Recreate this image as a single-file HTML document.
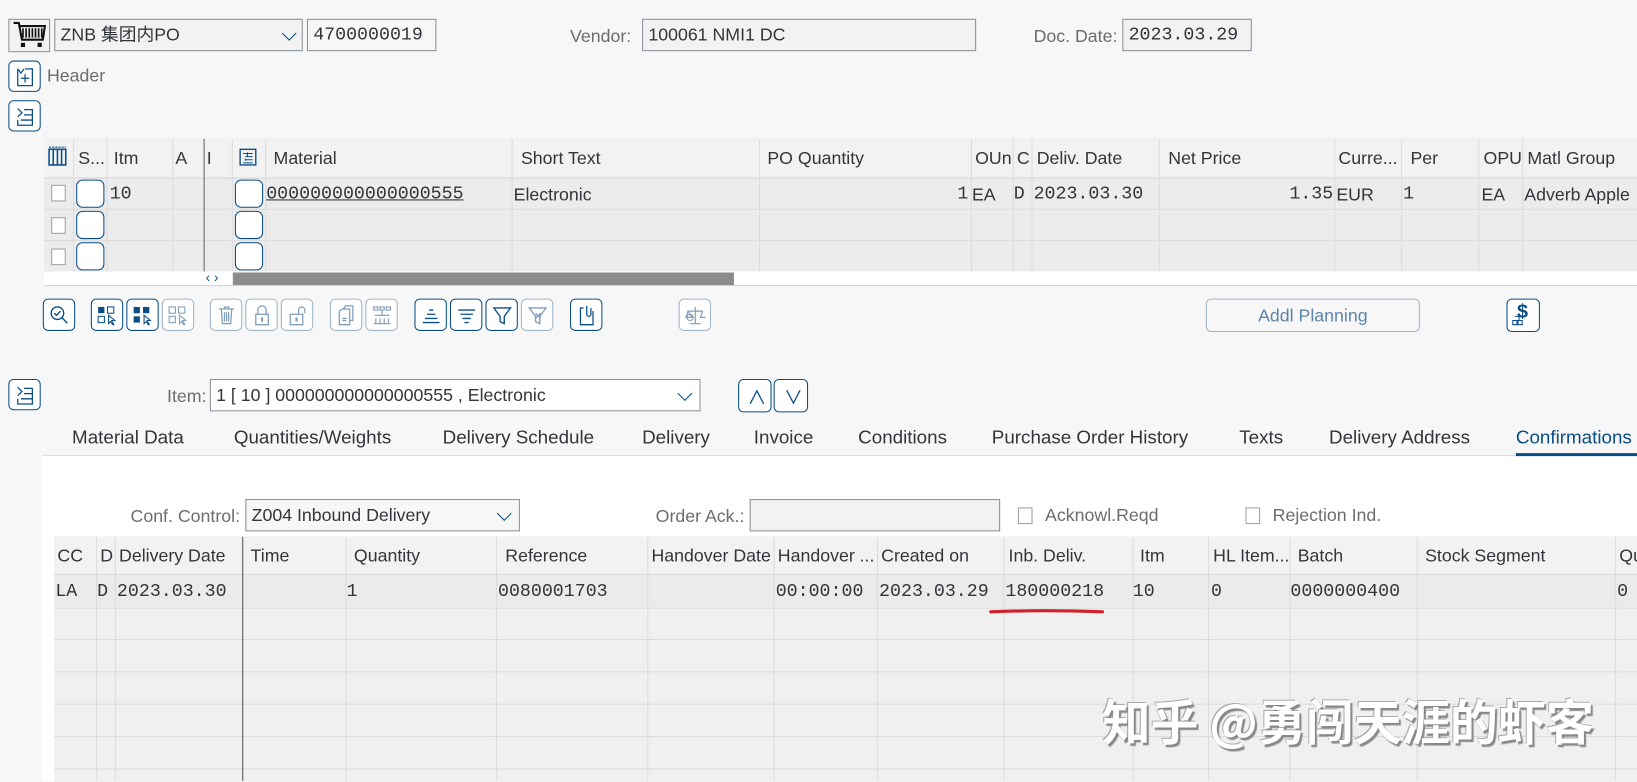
<!DOCTYPE html>
<html><head><meta charset="utf-8"><style>
html,body{margin:0;padding:0;background:#f7f7f7;width:1637px;height:781px;overflow:hidden}
#w{position:absolute;left:0;top:0;width:1568px;height:748px;transform:scale(1.04401);transform-origin:0 0;font-family:"Liberation Sans Narrow","Liberation Sans","Noto Sans CJK SC",sans-serif;font-size:17px;color:#32363a}
.a{position:absolute}
.fld{position:absolute;border:1px solid #89919a;background:#f2f2f2;box-sizing:border-box;padding-left:5px;line-height:30px;white-space:nowrap;overflow:hidden}
.mono{font-family:"Liberation Mono","DejaVu Sans Mono",monospace;font-size:17.5px}
.lbl{position:absolute;color:#6a6d70;line-height:20px;white-space:nowrap;margin-top:1px}
.btn{position:absolute;width:31px;height:31px;box-sizing:border-box;border:1px solid #0a4d86;border-radius:5px;background:#fff}
.btn.d{border-color:#9fb5c9}
.btn svg{position:absolute;left:5px;top:5px}
.t{position:absolute;white-space:nowrap;margin-top:1px}
.vl{position:absolute;width:1px;background:#dcdcdc}
.hl{position:absolute;height:1px;background:#dcdcdc}
.cb{position:absolute;width:14px;height:16px;border:1px solid #9aa0a6;background:#fff;box-sizing:border-box}
.rb{position:absolute;width:27px;height:27px;border:1.5px solid #0a4d86;border-radius:6px;background:#fff;box-sizing:border-box}
.chev{position:absolute;width:9px;height:9px;border-right:1.3px solid #0a4d86;border-bottom:1.3px solid #0a4d86;transform:rotate(45deg)}
</style></head><body><div id="w">

<div class="a" style="left:8px;top:18px;width:40px;height:32px;border:1px solid #89919a;background:#f2f2f2;box-sizing:border-box">
<svg width="36" height="30" viewBox="0 0 36 30" style="position:absolute;left:1px;top:0"><path d="M3 3h5l3 16h20l2-13H9" fill="none" stroke="#111" stroke-width="2"/><path d="M12 8v9M15 8v9M18 8v9M21 8v9M24 8v9M27 8v9M30 8v9" stroke="#111" stroke-width="1.6"/><rect x="10" y="22" width="4" height="4" fill="#111"/><rect x="26" y="22" width="4" height="4" fill="#111"/></svg></div>
<div class="fld" style="left:52px;top:18px;width:238px;height:31px">ZNB 集团内PO</div>
<div class="chev" style="left:272px;top:27px"></div>
<div class="fld mono" style="left:294px;top:18px;width:124px;height:31px;background:#f7f7f7">4700000019</div>
<div class="lbl" style="left:546px;top:24px">Vendor:</div>
<div class="fld" style="left:615px;top:18px;width:320px;height:31px">100061 NMI1 DC</div>
<div class="lbl" style="left:990px;top:24px">Doc. Date:</div>
<div class="fld mono" style="left:1075px;top:18px;width:124px;height:31px">2023.03.29</div>

<div class="btn" style="left:8px;top:58px;height:30px"><svg width="20" height="20" viewBox="0 0 20 20"><path d="M3 2v16h14V2H10M3 2l3 4 3-4M10 7v8M6 11h8" fill="none" stroke="#0a4d86" stroke-width="1.2"/></svg></div>
<div class="lbl" style="left:45px;top:62px;color:#6a6d70">Header</div>
<div class="btn" style="left:8px;top:96px;height:30px"><svg width="20" height="20" viewBox="0 0 20 20"><path d="M3 2l4 4-4 4M9 3h8v15H3v-5M9 8h8M6 13h11" fill="none" stroke="#0a4d86" stroke-width="1.2"/></svg></div>

<div class="a" style="left:42px;top:133px;width:1526px;height:140px;background:#ececec;border-top:1px solid #d5d5d5"></div>
<div class="a" style="left:42px;top:133px;width:1526px;height:37px;background:#f2f2f2;border-bottom:1px solid #d5d5d5"></div>
<div class="hl" style="left:42px;top:200px;width:1526px"></div>
<div class="hl" style="left:42px;top:230px;width:1526px"></div>
<div class="a" style="left:42px;top:260px;width:1526px;height:13px;background:#fff;border-bottom:1px solid #d5d5d5"></div>
<div class="a" style="left:223px;top:261px;width:480px;height:12px;background:#8c8c8c"></div>
<div class="t" style="left:197px;top:257px;font-size:13px;color:#0a4d86">‹ ›</div>
<div class="vl" style="left:70px;top:133px;height:127px"></div>
<div class="vl" style="left:102px;top:133px;height:127px"></div>
<div class="vl" style="left:165px;top:133px;height:127px"></div>
<div class="a" style="left:195px;top:133px;width:1px;height:127px;background:#666"></div>
<div class="vl" style="left:222px;top:133px;height:127px"></div>
<div class="vl" style="left:254px;top:133px;height:127px"></div>
<div class="vl" style="left:490px;top:133px;height:127px"></div>
<div class="vl" style="left:727px;top:133px;height:127px"></div>
<div class="vl" style="left:930px;top:133px;height:127px"></div>
<div class="vl" style="left:970px;top:133px;height:127px"></div>
<div class="vl" style="left:988px;top:133px;height:127px"></div>
<div class="vl" style="left:1110px;top:133px;height:127px"></div>
<div class="vl" style="left:1278px;top:133px;height:127px"></div>
<div class="vl" style="left:1342px;top:133px;height:127px"></div>
<div class="vl" style="left:1416px;top:133px;height:127px"></div>
<div class="vl" style="left:1458px;top:133px;height:127px"></div>
<svg class="a" style="left:46px;top:140px" width="18" height="19" viewBox="0 0 18 19"><path d="M1 1h16" stroke="#0a4d86" stroke-dasharray="2 1"/><rect x="1" y="3" width="16" height="15" fill="none" stroke="#0a4d86" stroke-width="1.5"/><path d="M5 3v15M9 3v15M13 3v15" stroke="#0a4d86" stroke-width="1.5"/></svg>
<svg class="a" style="left:229px;top:142px" width="17" height="17" viewBox="0 0 17 17"><rect x="1" y="1" width="15" height="15" fill="none" stroke="#0a4d86" stroke-width="1.3"/><path d="M4 5h9M6 8h7M6 11h7M4 14h9M8 4v4M6 10v2" stroke="#0a4d86"/></svg>
<div class="t" style="left:75px;top:141px">S...</div>
<div class="t" style="left:109px;top:141px">Itm</div>
<div class="t" style="left:168px;top:141px">A</div>
<div class="t" style="left:198px;top:141px">I</div>
<div class="t" style="left:262px;top:141px">Material</div>
<div class="t" style="left:499px;top:141px">Short Text</div>
<div class="t" style="left:735px;top:141px">PO Quantity</div>
<div class="t" style="left:934px;top:141px">OUn</div>
<div class="t" style="left:974px;top:141px">C</div>
<div class="t" style="left:993px;top:141px">Deliv. Date</div>
<div class="t" style="left:1119px;top:141px">Net Price</div>
<div class="t" style="left:1282px;top:141px">Curre...</div>
<div class="t" style="left:1351px;top:141px">Per</div>
<div class="t" style="left:1421px;top:141px">OPU</div>
<div class="t" style="left:1463px;top:141px">Matl Group</div>
<div class="cb" style="left:49px;top:177px"></div><div class="cb" style="left:49px;top:208px"></div><div class="cb" style="left:49px;top:238px"></div>
<div class="rb" style="left:73px;top:172px"></div><div class="rb" style="left:73px;top:202px"></div><div class="rb" style="left:73px;top:232px"></div>
<div class="rb" style="left:225px;top:172px"></div><div class="rb" style="left:225px;top:202px"></div><div class="rb" style="left:225px;top:232px"></div>
<div class="t mono" style="left:105px;top:175px">10</div>
<div class="t mono" style="left:255px;top:175px;text-decoration:underline">000000000000000555</div>
<div class="t" style="left:492px;top:176px">Electronic</div>
<div class="t mono" style="left:917px;top:175px">1</div>
<div class="t" style="left:931px;top:176px">EA</div>
<div class="t mono" style="left:971px;top:175px">D</div>
<div class="t mono" style="left:990px;top:175px">2023.03.30</div>
<div class="t mono" style="left:1235px;top:175px">1.35</div>
<div class="t" style="left:1280px;top:176px">EUR</div>
<div class="t mono" style="left:1344px;top:175px">1</div>
<div class="t" style="left:1419px;top:176px">EA</div>
<div class="t" style="left:1460px;top:176px">Adverb Apple</div>

<div class="btn" style="left:41px;top:286px"><svg width="20" height="20" viewBox="0 0 20 20"><circle cx="8" cy="8" r="6" fill="none" stroke="#0a4d86" stroke-width="1.3"/><path d="M12.5 12.5l5 5M5 8l2 2 4-4" fill="none" stroke="#0a4d86" stroke-width="1.3"/></svg></div>
<div class="btn" style="left:87px;top:286px"><svg width="20" height="20" viewBox="0 0 20 20"><rect x="1" y="2" width="6" height="6" fill="#0a4d86"/><rect x="10" y="2" width="6" height="6" fill="none" stroke="#0a4d86"/><rect x="1" y="11" width="6" height="6" fill="none" stroke="#0a4d86"/><path d="M11 10l6 5-3 0 2 4-1 0-2-3-2 2z" fill="none" stroke="#0a4d86"/></svg></div>
<div class="btn" style="left:121px;top:286px"><svg width="20" height="20" viewBox="0 0 20 20"><rect x="1" y="2" width="6" height="6" fill="#0a4d86"/><rect x="10" y="2" width="6" height="6" fill="#0a4d86"/><rect x="1" y="11" width="6" height="6" fill="#0a4d86"/><path d="M11 10l6 5-3 0 2 4-1 0-2-3-2 2z" fill="none" stroke="#0a4d86"/></svg></div>
<div class="btn d" style="left:155px;top:286px"><svg width="20" height="20" viewBox="0 0 20 20"><rect x="1" y="2" width="6" height="6" fill="none" stroke="#7f9cb8"/><rect x="10" y="2" width="6" height="6" fill="none" stroke="#7f9cb8"/><rect x="1" y="11" width="6" height="6" fill="none" stroke="#7f9cb8"/><path d="M11 10l6 5-3 0 2 4-1 0-2-3-2 2z" fill="none" stroke="#7f9cb8"/></svg></div>
<div class="btn d" style="left:201px;top:286px"><svg width="20" height="20" viewBox="0 0 20 20"><path d="M3 4h14M8 4V2h4v2M5 4l1 14h8l1-14M8 7v9M10 7v9M12 7v9" fill="none" stroke="#7f9cb8" stroke-width="1.2"/></svg></div>
<div class="btn d" style="left:235px;top:286px"><svg width="20" height="20" viewBox="0 0 20 20"><path d="M6 9V5a4 4 0 018 0v4M4 9h12v10H4z" fill="none" stroke="#7f9cb8" stroke-width="1.2"/><rect x="9" y="12" width="2" height="4" fill="#7f9cb8"/></svg></div>
<div class="btn d" style="left:269px;top:286px"><svg width="20" height="20" viewBox="0 0 20 20"><path d="M11 9V5a3 3 0 016 0v3M3 9h12v10H3z" fill="none" stroke="#7f9cb8" stroke-width="1.2"/><rect x="8" y="12" width="2" height="4" fill="#7f9cb8"/></svg></div>
<div class="btn d" style="left:316px;top:286px"><svg width="20" height="20" viewBox="0 0 20 20"><path d="M7 4l2-3h7v14h-3M3 6l3-2h7v15H3zM6 13h4M6 15h4" fill="none" stroke="#7f9cb8" stroke-width="1.2"/></svg></div>
<div class="btn d" style="left:350px;top:286px"><svg width="20" height="20" viewBox="0 0 20 20"><path d="M2 2h4v3H2zM8 2h4v3H8zM14 2h4v3h-4zM2 18h16M4 18v-5M8 18v-5M12 18v-5M16 18v-5M10 5v5M3 10h14" fill="none" stroke="#7f9cb8" stroke-width="1.1"/></svg></div>
<div class="btn" style="left:397px;top:286px"><svg width="20" height="20" viewBox="0 0 20 20"><path d="M8 5h4M6 9h8M4 13h12M2 17h16" stroke="#0a4d86" stroke-width="1.3"/></svg></div>
<div class="btn" style="left:431px;top:286px"><svg width="20" height="20" viewBox="0 0 20 20"><path d="M2 5h16M4 9h12M6 13h8M8 17h4" stroke="#0a4d86" stroke-width="1.3"/></svg></div>
<div class="btn" style="left:465px;top:286px"><svg width="20" height="20" viewBox="0 0 20 20"><path d="M2 3h16l-6 8v7l-4-2v-5z" fill="none" stroke="#0a4d86" stroke-width="1.3"/></svg></div>
<div class="btn d" style="left:499px;top:286px"><svg width="20" height="20" viewBox="0 0 20 20"><path d="M2 3h16l-6 8v7l-4-2v-5zM8 8l5 5M13 8l-5 5" fill="none" stroke="#7f9cb8" stroke-width="1.3"/></svg></div>
<div class="btn" style="left:546px;top:286px"><svg width="20" height="20" viewBox="0 0 20 20"><path d="M7 3H4v16h12V6M10 1v8a2 2 0 004 0V3" fill="none" stroke="#0a4d86" stroke-width="1.2"/></svg></div>
<div class="btn d" style="left:650px;top:286px"><svg width="20" height="20" viewBox="0 0 20 20"><path d="M10 2v16M5 18h10M3 6h14M3 6l-2 6h6zM17 6l-2 6h6" fill="none" stroke="#7f9cb8" stroke-width="1.1"/><circle cx="5" cy="12" r="3" fill="none" stroke="#7f9cb8"/></svg></div>
<div class="a" style="left:1155px;top:286px;width:205px;height:32px;border:1px solid #9fb5c9;border-radius:5px;background:#f7f7f7;box-sizing:border-box;text-align:center;line-height:31px;color:#5d85aa">Addl Planning</div>
<div class="btn" style="left:1443px;top:286px;width:32px;height:32px"><div class="t" style="left:9px;top:0px;font-weight:bold;color:#0a4d86;font-size:19px">$</div><svg width="12" height="12" viewBox="0 0 12 12" style="left:4px;top:14px"><path d="M1 6h4v4H1zM6 6h4v4H6zM3 2h4v4" fill="none" stroke="#0a4d86"/></svg></div>

<div class="btn" style="left:8px;top:363px;height:30px"><svg width="20" height="20" viewBox="0 0 20 20"><path d="M3 2l4 4-4 4M9 3h8v15H3v-5M9 8h8M6 13h11" fill="none" stroke="#0a4d86" stroke-width="1.2"/></svg></div>
<div class="lbl" style="left:160px;top:369px">Item:</div>
<div class="fld" style="left:201px;top:363px;width:470px;height:31px;background:#fff">1 [ 10 ] 000000000000000555 , Electronic</div>
<div class="chev" style="left:651px;top:372px"></div>
<div class="btn" style="left:707px;top:363px;width:32px;height:32px"><div class="t" style="left:8px;top:2px;color:#0a4d86;font-size:18px">∧</div></div>
<div class="btn" style="left:741px;top:363px;width:33px;height:32px"><div class="t" style="left:9px;top:2px;color:#0a4d86;font-size:18px">∨</div></div>

<div class="a" style="left:40px;top:436px;width:1528px;height:1px;background:#d9d9d9"></div>
<div class="t" style="left:69px;top:408px;font-size:18px">Material Data</div>
<div class="t" style="left:224px;top:408px;font-size:18px">Quantities/Weights</div>
<div class="t" style="left:424px;top:408px;font-size:18px">Delivery Schedule</div>
<div class="t" style="left:615px;top:408px;font-size:18px">Delivery</div>
<div class="t" style="left:722px;top:408px;font-size:18px">Invoice</div>
<div class="t" style="left:822px;top:408px;font-size:18px">Conditions</div>
<div class="t" style="left:950px;top:408px;font-size:18px">Purchase Order History</div>
<div class="t" style="left:1187px;top:408px;font-size:18px">Texts</div>
<div class="t" style="left:1273px;top:408px;font-size:18px">Delivery Address</div>
<div class="t" style="left:1452px;top:408px;font-size:18px;color:#0a4d86">Confirmations</div>
<div class="a" style="left:1452px;top:434px;width:116px;height:3px;background:#0a4d86"></div>

<div class="a" style="left:40px;top:437px;width:1528px;height:311px;background:#fff"></div>
<div class="lbl" style="left:125px;top:484px">Conf. Control:</div>
<div class="fld" style="left:235px;top:478px;width:263px;height:31px;background:#f7f7f7">Z004 Inbound Delivery</div>
<div class="chev" style="left:478px;top:487px"></div>
<div class="lbl" style="left:628px;top:484px">Order Ack.:</div>
<div class="fld" style="left:718px;top:478px;width:240px;height:31px"></div>
<div class="cb" style="left:975px;top:486px"></div><div class="lbl" style="left:1001px;top:483px">Acknowl.Reqd</div>
<div class="cb" style="left:1193px;top:486px"></div><div class="lbl" style="left:1219px;top:483px">Rejection Ind.</div>

<div class="a" style="left:52px;top:514px;width:1516px;height:234px;background:#f0f0f0;border-top:1px solid #d5d5d5"></div>
<div class="a" style="left:52px;top:514px;width:1516px;height:36px;background:#f2f2f2;border-bottom:1px solid #d5d5d5"></div>
<div class="a" style="left:52px;top:551px;width:1516px;height:31px;background:#ebebeb"></div>
<div class="hl" style="left:52px;top:582px;width:1516px"></div>
<div class="hl" style="left:52px;top:612px;width:1516px"></div>
<div class="hl" style="left:52px;top:643px;width:1516px"></div>
<div class="hl" style="left:52px;top:674px;width:1516px"></div>
<div class="hl" style="left:52px;top:705px;width:1516px"></div>
<div class="hl" style="left:52px;top:736px;width:1516px"></div>
<div class="vl" style="left:92px;top:514px;height:234px"></div>
<div class="vl" style="left:110px;top:514px;height:234px"></div>
<div class="a" style="left:232px;top:514px;width:1px;height:234px;background:#555"></div>
<div class="vl" style="left:331px;top:514px;height:234px"></div>
<div class="vl" style="left:475px;top:514px;height:234px"></div>
<div class="vl" style="left:620px;top:514px;height:234px"></div>
<div class="vl" style="left:741px;top:514px;height:234px"></div>
<div class="vl" style="left:840px;top:514px;height:234px"></div>
<div class="vl" style="left:961px;top:514px;height:234px"></div>
<div class="vl" style="left:1085px;top:514px;height:234px"></div>
<div class="vl" style="left:1157px;top:514px;height:234px"></div>
<div class="vl" style="left:1235px;top:514px;height:234px"></div>
<div class="vl" style="left:1357px;top:514px;height:234px"></div>
<div class="vl" style="left:1547px;top:514px;height:234px"></div>
<div class="t" style="left:55px;top:522px">CC</div>
<div class="t" style="left:96px;top:522px">D</div>
<div class="t" style="left:114px;top:522px">Delivery Date</div>
<div class="t" style="left:240px;top:522px">Time</div>
<div class="t" style="left:339px;top:522px">Quantity</div>
<div class="t" style="left:484px;top:522px">Reference</div>
<div class="t" style="left:624px;top:522px">Handover Date</div>
<div class="t" style="left:745px;top:522px">Handover ...</div>
<div class="t" style="left:844px;top:522px">Created on</div>
<div class="t" style="left:966px;top:522px">Inb. Deliv.</div>
<div class="t" style="left:1092px;top:522px">Itm</div>
<div class="t" style="left:1162px;top:522px">HL Item...</div>
<div class="t" style="left:1243px;top:522px">Batch</div>
<div class="t" style="left:1365px;top:522px">Stock Segment</div>
<div class="t" style="left:1551px;top:522px">Qu</div>
<div class="t mono" style="left:53px;top:556px">LA</div>
<div class="t mono" style="left:93px;top:556px">D</div>
<div class="t mono" style="left:112px;top:556px">2023.03.30</div>
<div class="t mono" style="left:332px;top:556px">1</div>
<div class="t mono" style="left:477px;top:556px">0080001703</div>
<div class="t mono" style="left:743px;top:556px">00:00:00</div>
<div class="t mono" style="left:842px;top:556px">2023.03.29</div>
<div class="t mono" style="left:963px;top:556px">180000218</div>
<div class="t mono" style="left:1085px;top:556px">10</div>
<div class="t mono" style="left:1160px;top:556px">0</div>
<div class="t mono" style="left:1236px;top:556px">0000000400</div>
<div class="t mono" style="left:1549px;top:556px">0</div>
<svg class="a" style="left:946px;top:582px" width="116" height="8"><path d="M3 4Q50 2 110 4" stroke="#d0202a" stroke-width="3" fill="none" stroke-linecap="round"/></svg>

<div class="t" style="left:1056px;top:656px;font-size:46px;font-family:'Noto Sans CJK SC',sans-serif;font-weight:bold;color:#fff;text-shadow:2px 2px 1px #888,-1px -1px 0 #aaa">知乎 @勇闯天涯的虾客</div>
</div></body></html>
